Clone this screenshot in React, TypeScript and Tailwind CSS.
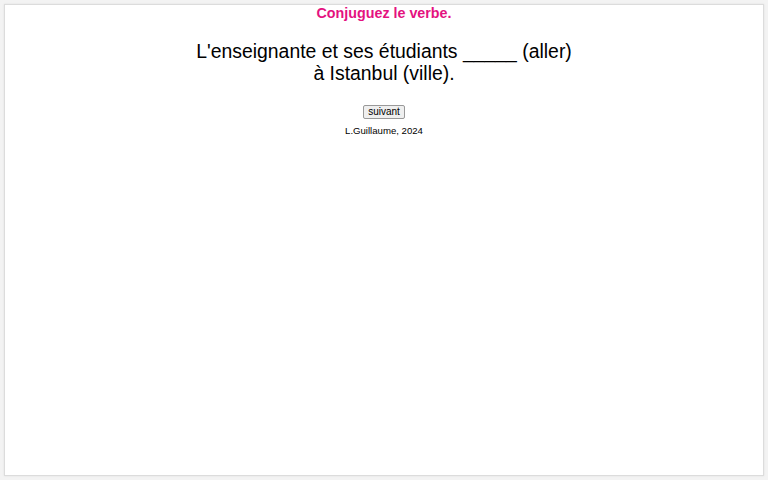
import React from "react";

export default function App() {
  return (
    <div
      className="w-[768px] h-[480px] bg-[#f3f3f3] p-[4px]"
      style={{ fontFamily: '"Liberation Sans", Arial, sans-serif' }}
    >
      <div className="h-[472px] bg-white border border-[#dcdcdc] shadow-[0_0_2px_rgba(0,0,0,0.08)] flex flex-col items-center text-center">
        <div className="mt-0 text-[14.3px] leading-[16px] font-bold text-[#e4127f]">
          Conjuguez le verbe.
        </div>
        <div className="mt-[19px] text-[19.4px] leading-[22px] text-black">
          L'enseignante et ses étudiants _____ (aller)
          <br />à Istanbul (ville).
        </div>
        <button className="mt-[21px] h-[14px] px-[4px] text-[10px] leading-[12px] text-black bg-[#efefef] border border-[#999999] rounded-[2px]">
          suivant
        </button>
        <div className="mt-[6px] text-[9.6px] leading-[12px] text-black">
          L.Guillaume, 2024
        </div>
      </div>
    </div>
  );
}
